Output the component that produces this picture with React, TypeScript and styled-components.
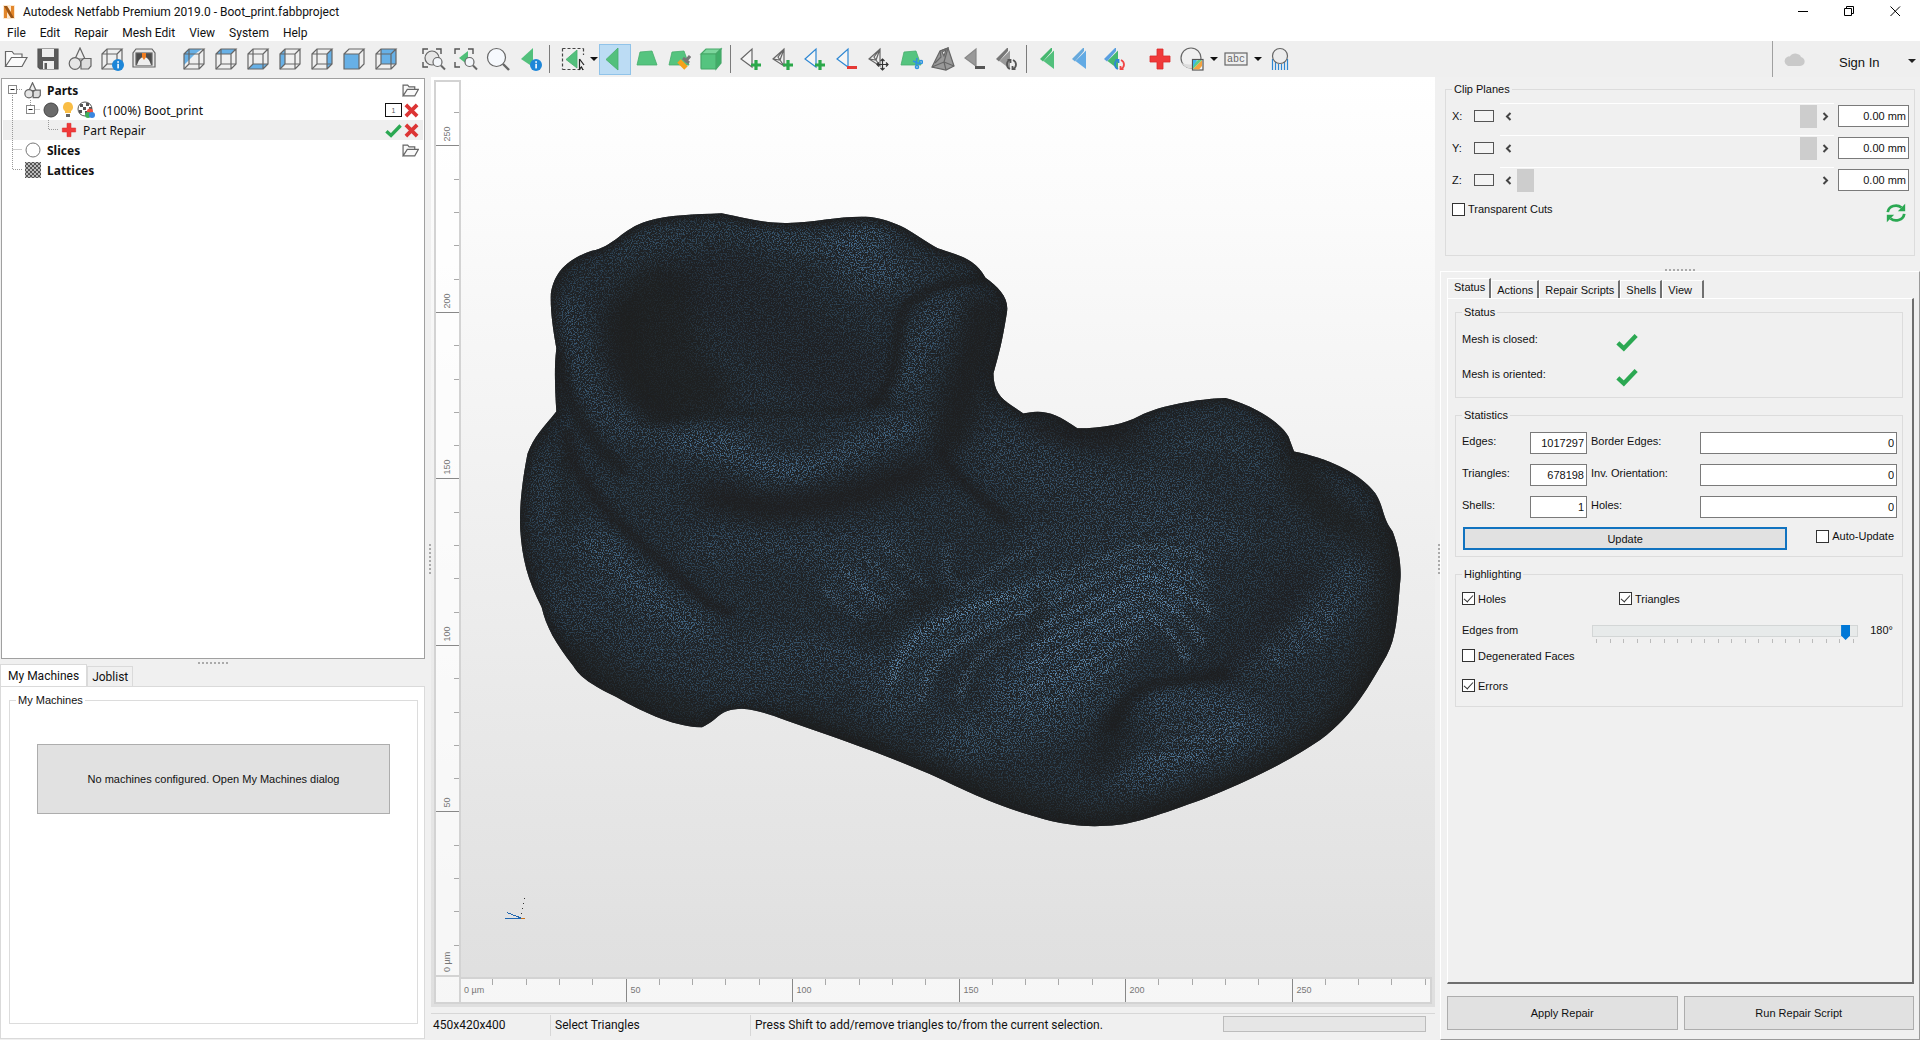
import React from "react";
import styled, { createGlobalStyle } from "styled-components";

const UI = `"Noto Sans", "Open Sans", sans-serif`;
const CHROME = `Roboto, "Noto Sans", sans-serif`;
const SMALL = `"Liberation Sans", Arial, sans-serif`;

const GlobalStyle = createGlobalStyle`
  *, *::before, *::after { box-sizing: border-box; }
  body { margin: 0; background: #f0f0f0; color: #111; }
  button, input { font: inherit; color: inherit; margin: 0; }
  svg { display: block; flex: none; }
`;

/* ---------- shell ---------- */

const Shell = styled.div`
  display: flex;
  flex-direction: column;
  height: 100vh;
  min-height: 860px;
  overflow: hidden;
  background: #f0f0f0;
  font: 12px/16px ${CHROME};
`;

const TitleBar = styled.header`
  display: flex;
  align-items: center;
  height: 23px;
  padding-left: 3px;
  gap: 8px;
  background: #fff;
`;

const Title = styled.h1`
  flex: 1;
  margin: 0;
  font-size: 12px;
  line-height: 16px;
  font-weight: 400;
`;

const WindowControls = styled.div`
  display: flex;
  padding-right: 2px;
`;

const WindowButton = styled.button`
  display: flex;
  align-items: center;
  justify-content: center;
  width: 46px;
  height: 22px;
  padding: 0;
  border: 0;
  background: transparent;
`;

const MenuBar = styled.nav`
  display: flex;
  gap: 14px;
  height: 18px;
  padding-left: 7px;
  background: #fff;
`;

const MenuItem = styled.button`
  padding: 0;
  border: 0;
  background: transparent;
  line-height: 20px;
`;

const ToolBar = styled.div`
  display: flex;
  align-items: center;
  height: 36px;
  background: #efefef;
`;

const ToolButton = styled.button<{ $active?: boolean }>`
  display: flex;
  align-items: center;
  justify-content: center;
  width: 32px;
  height: 31px;
  padding: 0;
  border: 1px solid ${(p) => (p.$active ? "#90c3e9" : "transparent")};
  background: ${(p) => (p.$active ? "#bcdcf4" : "transparent")};
`;

const DropButton = styled.button<{ $w: number }>`
  display: flex;
  align-items: center;
  justify-content: center;
  width: ${(p) => p.$w}px;
  height: 31px;
  padding: 0;
  border: 0;
  background: transparent;

  &::after {
    content: "";
    border: 4px solid transparent;
    border-top-color: #111;
    border-bottom: 0;
  }
`;

const Gap = styled.span<{ $w: number }>`
  width: ${(p) => p.$w}px;
`;

const Separator = styled.span`
  width: 8px;
  height: 28px;
  border-left: 1px solid #7b7b7b;
  margin-left: 3px;
  margin-right: -3px;
`;

const Account = styled.div`
  display: flex;
  align-items: center;
  align-self: stretch;
  margin-left: auto;
  width: 148px;
  padding-left: 9px;
  border-left: 1px solid #a0a0a0;
`;

const SignIn = styled.button`
  display: flex;
  align-items: center;
  justify-content: space-between;
  flex: 1;
  height: 36px;
  padding: 8px 4px 0 33px;
  border: 0;
  background: transparent;
  font: 13px/20px ${SMALL};

  &::after {
    content: "";
    margin-top: -4px;
    border: 4px solid transparent;
    border-top-color: #222;
    border-bottom: 0;
  }
`;

const Body = styled.div`
  display: flex;
  flex: 1;
  min-height: 0;
`;

/* ---------- left side ---------- */

const LeftSide = styled.aside`
  display: flex;
  flex-direction: column;
  width: 428px;
  padding: 1px 3px 0 0;
`;

const Tree = styled.ul`
  flex: 1;
  margin: 0 0 0 1px;
  padding: 1px;
  border: 1px solid #a0a0a0;
  background: #fff;
  font: 12px/16px ${UI};
  list-style: none;
`;

const TreeRow = styled.li<{ $strong?: boolean; $selected?: boolean }>`
  display: flex;
  align-items: center;
  height: 20px;
  padding-right: 4px;
  background: ${(p) => (p.$selected ? "#efefef" : "transparent")};
  font-weight: ${(p) => (p.$strong ? 700 : 400)};
`;

const TreeLabel = styled.span<{ $inset?: number }>`
  flex: 1;
  padding: 2px 0 0 ${(p) => p.$inset ?? 6}px;
`;

const RowIcon = styled.button`
  padding: 0;
  margin-left: 2px;
  border: 0;
  background: transparent;
`;

const DotsH = styled.div<{ $h: number }>`
  display: flex;
  align-items: flex-end;
  justify-content: center;
  height: ${(p) => p.$h}px;

  &::after {
    content: "";
    width: 30px;
    height: 2px;
    background: repeating-linear-gradient(90deg, #aaa 0 2px, transparent 2px 4px);
  }
`;

const DotsV = styled.div<{ $w: number }>`
  display: flex;
  align-items: center;
  justify-content: flex-end;
  width: ${(p) => p.$w}px;

  &::after {
    content: "";
    width: 2px;
    height: 30px;
    background: repeating-linear-gradient(180deg, #aaa 0 2px, transparent 2px 4px);
  }
`;

const Machines = styled.section`
  display: flex;
  flex-direction: column;
  height: 376px;
  padding-bottom: 1px;
`;

const MachineTabs = styled.div`
  display: flex;
  align-items: flex-end;
  height: 22px;
`;

const MachineTab = styled.button<{ $active?: boolean }>`
  height: ${(p) => (p.$active ? 23 : 20)}px;
  margin-bottom: ${(p) => (p.$active ? -1 : 0)}px;
  padding: 0 ${(p) => (p.$active ? 7 : 4)}px;
  border: 1px solid #dadada;
  border-bottom: 0;
  background: ${(p) => (p.$active ? "#fff" : "#f0f0f0")};
`;

const MachinePane = styled.div`
  display: flex;
  flex: 1;
  padding: 6px 6px 14px 8px;
  border: 1px solid #dadada;
  background: #fff;
`;

const Group = styled.fieldset<{ $pad: string }>`
  min-width: 0;
  margin: 0;
  padding: ${(p) => p.$pad};
  border: 1px solid #dcdcdc;
  font: 11px/14px ${SMALL};
`;

const Legend = styled.legend`
  padding: 0 2px;
`;

const MachineGroup = styled(Group)`
  flex: 1;
`;

const MachineAction = styled.div`
  display: flex;
  padding: 0 21px;
`;

const PushButton = styled.button<{ $h: number; $default?: boolean }>`
  flex: 1;
  width: 100%;
  height: ${(p) => p.$h}px;
  padding: 0;
  border: ${(p) => (p.$default ? "2px solid #1173c0" : "1px solid #adadad")};
  background: #e1e1e1;
  font: 11px/14px ${SMALL};
`;

/* ---------- centre ---------- */

const Centre = styled.main`
  display: flex;
  flex-direction: column;
  flex: 1;
  min-width: 0;
`;

const Viewport = styled.div`
  position: relative;
  display: grid;
  grid-template: minmax(0, 1fr) 27px / 27px minmax(0, 1fr);
  flex: 1;
  min-height: 0;
  padding: 3px;
  background: linear-gradient(#fff, #fbfbfb 14%, #e1e1e1 92%, #dfdfdf);
`;

const Scene = styled.svg`
  position: absolute;
  inset: 0;
  width: 100%;
  height: 100%;
`;

const RulerCell = styled.div<{ $edges: string }>`
  position: relative;
  min-width: 0;
  min-height: 0;
  overflow: hidden;
  border: 0 solid #d3d3d3;
  border-width: ${(p) => p.$edges};
  background: rgba(255, 255, 255, 0.72);
`;

const RulerArt = styled.svg`
  width: 100%;
  height: 100%;
  font: 9px ${SMALL};
  fill: #777;
`;

const StatusBar = styled.footer`
  display: flex;
  align-items: center;
  height: 27px;
  margin-top: 6px;
  padding: 0 9px 4px 2px;
  border-top: 1px solid #d7d7d7;
`;

const StatusCell = styled.span<{ $w?: number }>`
  flex: ${(p) => (p.$w ? `0 0 ${p.$w}px` : "1")};
  padding-left: 4px;
  border-left: 1px solid #d7d7d7;
  line-height: 21px;
  white-space: nowrap;

  &:first-child {
    padding-left: 0;
    border-left: 0;
  }
`;

const Progress = styled.div`
  width: 203px;
  height: 16px;
  margin-top: -2px;
  border: 1px solid #bcbcbc;
  background: #e6e6e6;
`;

/* ---------- right side ---------- */

const RightSide = styled.aside`
  display: flex;
  flex-direction: column;
  width: 480px;
  padding-top: 5px;
  font: 11px/14px ${SMALL};
`;

const ClipGroup = styled(Group)`
  height: 174px;
  margin: 0 5px;
`;

const ClipRow = styled.div`
  display: flex;
  align-items: center;
  height: 25px;
  margin-bottom: 7px;
`;

const ClipLabel = styled.label`
  width: 22px;
`;

const Swatch = styled.button`
  width: 20px;
  height: 12px;
  margin-right: 6px;
  padding: 0;
  border: 1px solid #555;
  background: #f4f4f4;
`;

const ScrollTrack = styled.div`
  display: flex;
  flex: 1;
  height: 25px;
  border-top: 1px solid #fff;
`;

const ScrollArrow = styled.button`
  display: flex;
  align-items: center;
  justify-content: center;
  width: 17px;
  padding: 0;
  border: 0;
  background: transparent;
`;

const ScrollRange = styled.input`
  flex: 1;
  min-width: 0;
  height: 24px;
  appearance: none;
  background: transparent;

  &::-webkit-slider-thumb {
    appearance: none;
    width: 17px;
    height: 23px;
    background: #cdcdcd;
  }
`;

const Field = styled.input<{ $w?: number }>`
  width: ${(p) => (p.$w ? `${p.$w}px` : "100%")};
  height: 22px;
  padding: 0 2px;
  border: 1px solid #7a7a7a;
  background: #fff;
  font: 11px/14px ${SMALL};
  text-align: right;
`;

const ClipField = styled(Field)`
  margin-left: 4px;
`;

const ClipFooter = styled.div`
  display: flex;
  align-items: flex-start;
  justify-content: space-between;
  padding: 3px 2px 0 0;
`;

const IconButton = styled.button`
  padding: 0;
  border: 0;
  background: transparent;
`;

const CheckLabel = styled.label`
  display: flex;
  align-items: center;
  gap: 3px;
`;

const CheckInput = styled.input`
  display: flex;
  justify-content: center;
  flex: none;
  width: 13px;
  height: 13px;
  appearance: none;
  border: 1px solid #333;
  background: #fff;

  &:checked::after {
    content: "";
    width: 5px;
    height: 9px;
    border: solid #333;
    border-width: 0 1px 1px 0;
    transform: rotate(42deg);
  }
`;

const RepairPanel = styled.section`
  display: flex;
  flex-direction: column;
  flex: 1;
  padding: 6px 5px 9px 6px;
  border: 1px solid #fff;
  border-right-color: #9b9b9b;
  border-bottom-color: #9b9b9b;
`;

const RepairTabs = styled.div`
  display: flex;
  align-items: flex-end;
  height: 20px;
`;

const RepairTab = styled.button<{ $active?: boolean }>`
  min-width: 42px;
  height: ${(p) => (p.$active ? 21 : 18)}px;
  margin: 0 0 ${(p) => (p.$active ? -1 : 0)}px 0;
  padding: 0 4px ${(p) => (p.$active ? 4 : 0)}px ${(p) => (p.$active ? 6 : 5)}px;
  border: 1px solid #fff;
  border-right: 2px solid #707070;
  border-bottom: 0;
  background: #f0f0f0;
  text-align: left;
`;

const RepairPage = styled.div`
  display: flex;
  flex-direction: column;
  gap: 10px;
  flex: 1;
  padding: 6px 9px 0 7px;
  border: 1px solid #fff;
  border-right: 2px solid #6e6e6e;
  border-bottom: 2px solid #6e6e6e;
`;

const StatusRow = styled.div`
  display: grid;
  grid-template-columns: 154px 1fr;
  align-items: center;
  height: 35px;

  svg { margin-top: 7px; }
`;

const StatGrid = styled.div`
  display: grid;
  grid-template-columns: 68px 57px 113px minmax(0, 1fr);
  row-gap: 10px;

  label { padding-top: 2px; }
  label:nth-of-type(even) { padding-left: 4px; }
`;

const UpdateRow = styled.div`
  display: flex;
  align-items: flex-start;
  gap: 29px;
  padding: 9px 3px 0 1px;

  label { padding-top: 2px; }
`;

const PairRow = styled.div<{ $h: number }>`
  display: grid;
  grid-template-columns: 157px 1fr;
  align-items: center;
  height: ${(p) => p.$h}px;
`;

const SliderRow = styled.div`
  display: grid;
  grid-template-columns: 130px 1fr 38px;
  height: 37px;
  padding-top: 14px;
`;

const Angle = styled.output`
  padding-right: 3px;
  text-align: right;
`;

const AngleRange = styled.input`
  display: block;
  width: 100%;
  height: 16px;
  appearance: none;
  background: transparent;

  &::-webkit-slider-runnable-track {
    height: 12px;
    border: 1px solid #d3d6d6;
    background: #e7eaea;
  }

  &::-webkit-slider-thumb {
    appearance: none;
    width: 9px;
    height: 15px;
    margin-top: -1px;
    background: #0078d7;
    clip-path: polygon(0 0, 100% 0, 100% 70%, 50% 100%, 0 70%);
  }
`;

const Ticks = styled.div`
  display: flex;
  justify-content: space-between;
  height: 4px;
  padding: 0 11px 0 4px;

  i { width: 1px; background: #bbb; }
  i:last-child { margin-right: -7px; }
`;

const ActionRow = styled.div`
  display: flex;
  gap: 6px;
  padding-top: 12px;
`;

/* ---------- icons ---------- */

const Icon = ({ children, size = 24 }: { children: React.ReactNode; size?: number }) => (
  <svg width={size} height={size} viewBox="0 0 24 24" fill="none" stroke="#666" strokeWidth={(1.2 * 24) / size} aria-hidden="true">
    {children}
  </svg>
);

const Folder = ({ size }: { size?: number }) => (
  <Icon size={size}>
    <path d="M1.500 19.500V4.500H8L10 7H18V10M1.500 19.500L7.500 10.500H23L18 19.500Z" fill="#fafafa" />
  </Icon>
);

const Shapes = ({ size }: { size?: number }) => (
  <Icon size={size}>
    <path d="M12 1L7 12H17Z" fill="#eee" />
    <circle cx="7" cy="16.500" r="5.800" fill="#e6e6e6" />
    <path d="M13 14L15.500 11.500H23V19L20.500 22H13Z" fill="#ddd" />
  </Icon>
);

const InfoBadge = () => (
  <g stroke="none">
    <circle cx="18" cy="18" r="6" fill="#1d86d8" />
    <rect x="17.300" y="16.800" width="1.600" height="4.600" fill="#fff" />
    <rect x="17.300" y="14.200" width="1.600" height="1.600" fill="#fff" />
  </g>
);

const faces: Record<string, string> = {
  corner: "M2 7L13 7L2 18Z M2 7L7 2H20L13 7Z",
  top: "M2 7L7 2H22L17 7Z",
  bottom: "M2 22L7 17H22L17 22Z",
  left: "M2 7L7 2V17L2 22Z",
  right: "M17 7L22 2V17L17 22Z",
  front: "M2 7H17V22H2Z",
  back: "M7 2H22V17H7Z",
  none: "",
};

const Cube = ({ face }: { face: string }) => (
  <>
    <path d={faces[face]} fill="#67b0e6" stroke="none" />
    <path d="M2 7H17V22H2ZM2 7L7 2H22L17 7M22 2V17L17 22" />
    {face !== "front" && <path d="M7 2V17H22M7 17L2 22" />}
  </>
);

const Plus = ({ x = 17, y = 18, color = "#2ba84a" }) => (
  <path d={`M${x - 5} ${y}H${x + 5}M${x} ${y - 5}V${y + 5}`} stroke={color} strokeWidth="3.200" />
);

const Triangle = ({ color }: { color: string }) => <path d="M13 2V20L2 12Z" stroke={color} fill="#fff" fillOpacity=".4" />;

const MeshTriangle = () => <path d="M13 2V19L2 12ZM13 2L9 13L2 12M9 13L13 19M13 2L7 10L9 13" />;

const Brackets = () => <path d="M1 7V2H6M14 2H19V7M1 15V20H6" stroke="#555" strokeWidth="1.400" />;

const Lens = () => (
  <>
    <circle cx="15.500" cy="15" r="4.500" fill="#f3f6fa" />
    <path d="M19 18.500L23 22.500" strokeWidth="2" />
  </>
);

const Recycle = ({ a, b }: { a: string; b: string }) => (
  <g strokeWidth="1.800">
    <path d="M15 22C11 20 11 14 15 13M12.500 13H15.500V16" stroke={a} />
    <path d="M18 13C22 15 22 20 18 22M20.500 22H17.500V19" stroke={b} />
  </g>
);

const Layered = ({ back, front }: { back: string; front: string }) => (
  <g stroke="none">
    <path d="M12 1L1 12L4 14.500L13 4V1Z" fill={back} />
    <path d="M15 3.500V22L4.500 14Z" fill={front} />
  </g>
);

const RedCross = ({ size }: { size?: number }) => (
  <Icon size={size}>
    <path d="M9 2H15V9H22V15H15V22H9V15H2V9H9Z" fill="#f03a3a" stroke="#d92b2b" strokeWidth=".8" />
  </Icon>
);

const Delete = () => (
  <Icon size={15}>
    <path d="M3 3L21 21M21 3L3 21" stroke="#dc3535" strokeWidth="6" />
  </Icon>
);

const Check = ({ size }: { size: number }) => (
  <Icon size={size}>
    <path d="M2 13L8.500 19L22 5" stroke="#2ba852" strokeWidth="4.800" />
  </Icon>
);

type Tool = { label: string; art: React.ReactNode };

const fileTools: Tool[] = [
  { label: "Open project", art: <Folder /> },
  {
    label: "Save project",
    art: (
      <Icon>
        <path d="M2 2H22V22H4L2 20Z" fill="#5b5b5b" stroke="#555" />
        <rect x="6" y="2" width="12" height="8" fill="#efefef" stroke="none" />
        <rect x="7" y="14" width="11" height="8" fill="#efefef" stroke="none" />
        <rect x="8.500" y="16" width="2.500" height="6" fill="#5b5b5b" stroke="none" />
      </Icon>
    ),
  },
  { label: "Add part", art: <Shapes /> },
  { label: "Part information", art: <Icon><Cube face="none" /><InfoBadge /></Icon> },
  {
    label: "Print",
    art: (
      <Icon>
        <path d="M4 2H20L23 6V20H1V6Z" fill="#e7e7e7" />
        <rect x="4" y="6" width="16" height="12" fill="#4c4c4c" />
        <path d="M5 18C7 11 10 10 12 10S17 11 19 18Z" fill="#eee" stroke="none" />
        <path d="M10 6H14V10L12 13L10 10Z" fill="#ef7d22" stroke="none" />
      </Icon>
    ),
  },
];

const viewTools: Tool[] = ["corner", "top", "bottom", "left", "right", "front", "back"].map((face) => ({
  label: `View ${face}`,
  art: <Icon><Cube face={face} /></Icon>,
}));

const zoomTools: Tool[] = [
  { label: "Zoom to parts", art: <Icon><Brackets /><circle cx="10" cy="11" r="7" fill="#e6e6e6" /><Lens /></Icon> },
  { label: "Zoom to selection", art: <Icon><Brackets /><path d="M14 4V18L5 11Z" fill="#4fbf78" stroke="none" /><Lens /></Icon> },
  {
    label: "Zoom",
    art: (
      <Icon>
        <circle cx="10.500" cy="10.500" r="9" fill="#f6f9fd" />
        <path d="M17 17L23 23" strokeWidth="2.400" />
      </Icon>
    ),
  },
  { label: "Triangle information", art: <Icon><path d="M15 1V20L3 12Z" fill="#52c07c" stroke="none" /><InfoBadge /></Icon> },
];

const greenQuad = <path d="M5 5L17 4L22 18H2Z" fill="#55c47f" stroke="#46ad6c" strokeWidth=".8" />;

const selectTools: Tool[] = [
  { label: "Select triangles", art: <Icon><path d="M15 1V23L3 12.500Z" fill="#52c07c" stroke="#46ad6c" strokeWidth=".8" /></Icon> },
  { label: "Select surfaces", art: <Icon>{greenQuad}</Icon> },
  {
    label: "Paint selection",
    art: (
      <Icon>
        {greenQuad}
        <path d="M12 14L19 21" stroke="#f6a21c" strokeWidth="5" />
        <path d="M16 11L22 16M18 15L23 9" stroke="#777" strokeWidth="3" />
      </Icon>
    ),
  },
  {
    label: "Select shells",
    art: (
      <Icon>
        <path d="M2 7L7 2H22L17 7Z" fill="#7cd69d" stroke="#46a869" />
        <path d="M17 7L22 2V16L17 22Z" fill="#3fae68" stroke="#46a869" />
        <rect x="2" y="7" width="15" height="15" rx="1" fill="#55c47f" stroke="#46a869" />
      </Icon>
    ),
  },
];

const minus = (color: string) => <path d="M12 20.500H22" stroke={color} strokeWidth="3" />;

const editTools: Tool[] = [
  { label: "Add triangle", art: <Icon><Triangle color="#666" /><Plus /></Icon> },
  { label: "Add node", art: <Icon><MeshTriangle /><Plus /></Icon> },
  { label: "Add edge", art: <Icon><Triangle color="#2d87d3" /><Plus /></Icon> },
  { label: "Remove edge", art: <Icon><Triangle color="#2d87d3" />{minus("#e53935")}</Icon> },
  {
    label: "Move node",
    art: (
      <Icon>
        <MeshTriangle />
        <path d="M10 17.500H21M15.500 12V23M12 15.500L10 17.500L12 19.500M19 15.500L21 17.500L19 19.500M13.500 14L15.500 12L17.500 14M13.500 21L15.500 23L17.500 21" stroke="#333" />
      </Icon>
    ),
  },
  {
    label: "Cut surface",
    art: (
      <Icon>
        {greenQuad}
        <g stroke="#2d93e0" strokeWidth="1.600">
          <path d="M14 14L21 17M18 11L17 18" />
          <circle cx="22" cy="15" r="1.500" />
          <circle cx="18" cy="20" r="1.500" />
        </g>
      </Icon>
    ),
  },
  {
    label: "Extrude",
    art: (
      <Icon>
        <path d="M9 4L17 1L23 19L15 23L1 20Z" fill="#999" />
        <path d="M9 4L17 1L13 15L15 23M13 15L1 20M13 15L23 19M9 4L10 10L4 16" />
        <path d="M11 5L15 3L13 9Z" fill="#eee" />
      </Icon>
    ),
  },
  { label: "Remove triangles", art: <Icon><path d="M13 2V19L2 11Z" fill="#999" stroke="#888" />{minus("#555")}</Icon> },
  { label: "Flip triangles", art: <Icon><Layered back="#777" front="#999" /><Recycle a="#555" b="#555" /></Icon> },
];

const orientTools: Tool[] = [
  { label: "Expand selection", art: <Icon><Layered back="#46b870" front="#52c07c" /></Icon> },
  { label: "Shrink selection", art: <Icon><Layered back="#67a9dc" front="#62aae4" /></Icon> },
  { label: "Invert selection", art: <Icon><Layered back="#5a9fe0" front="#45b870" /><Recycle a="#2d87d3" b="#f04545" /></Icon> },
];

const Tools = ({ items, active }: { items: Tool[]; active?: number }) => (
  <>
    {items.map((t, i) => (
      <ToolButton key={t.label} aria-label={t.label} title={t.label} $active={i === active}>
        {t.art}
      </ToolButton>
    ))}
  </>
);

/* ---------- tree guides ---------- */

const Guide = ({ w, d, box }: { w: number; d: string; box?: number }) => (
  <svg width={w} height="20" fill="none" stroke="#999" strokeDasharray="1 1" aria-hidden="true">
    <path d={d} />
    {box !== undefined && (
      <g strokeDasharray="none">
        <rect x={box - 4} y="5.500" width="8" height="8" fill="#fff" stroke="#888" />
        <path d={`M${box - 2} 9.500H${box + 2}`} stroke="#222" />
      </g>
    )}
  </svg>
);

/* ---------- 3D view ---------- */

const OUTLINE =
  "M83 270C88 225 105 190 150 168C185 160 200 115 240 98C275 82 320 82 362 79C400 90 430 103 470 102C520 100 560 84 605 88C660 100 680 135 715 162C750 180 775 185 793 232C815 255 832 280 828 315C822 370 818 400 806 460C806 500 818 520 835 535L855 555C885 545 905 550 943 590C985 590 1020 580 1045 560C1080 535 1140 520 1185 518C1230 535 1275 575 1288 610L1297 645C1350 660 1405 695 1430 745C1445 780 1440 800 1458 835C1470 880 1473 930 1470 960C1466 1030 1464 1090 1448 1130C1420 1200 1395 1270 1340 1330C1290 1380 1220 1430 1150 1470C1110 1490 1050 1525 1010 1532C960 1540 930 1532 900 1523C800 1485 740 1435 700 1410C620 1360 540 1320 470 1285C440 1270 420 1258 395 1256C355 1258 360 1280 330 1300C290 1300 240 1270 190 1228C150 1200 130 1180 120 1155C90 1100 75 1060 68 1015C45 950 36 900 33 830C31 770 38 700 45 650C55 610 70 590 92 550C90 500 88 450 92 400C86 350 82 310 83 270Z";

/* path, stroke width, strength */
type Stroke = [string, number, number];

const lights: Stroke[] = [
  ["M110 290C115 400 150 520 200 590C260 620 330 600 400 620", 30, 0.5],
  ["M300 620C360 630 420 690 480 690C560 670 600 610 680 580", 50, 0.5],
  ["M430 670L490 690", 40, 0.4],
  ["M440 130C500 170 570 150 620 130", 50, 0.35],
  ["M590 150C570 200 590 240 640 220", 80, 0.4],
  ["M200 170C260 130 320 120 400 130", 60, 0.15],
  ["M735 290C690 340 690 430 650 500", 40, 0.5],
  ["M150 860C200 930 240 1000 320 1060", 60, 0.5],
  ["M60 670C80 740 70 800 100 860", 34, 0.22],
  ["M130 1000C240 1120 380 1180 560 1160", 120, 0.14],
  ["M420 1110C500 1090 560 1120 600 1150", 50, 0.2],
  ["M340 870C460 860 560 880 640 860", 90, 0.2],
  ["M560 940L620 1010", 60, 0.4],
  ["M880 860L1180 840", 90, 0.2],
  ["M660 1120C700 1040 800 1000 900 960", 60, 0.35],
  ["M650 1240C640 1150 720 1060 860 1000C960 950 1040 930 1120 900", 90, 0.3],
  ["M860 1200C920 1120 1000 1040 1080 980", 130, 0.45],
  ["M760 1330C860 1270 900 1300 960 1200", 120, 0.3],
  ["M1240 1150C1320 1080 1370 1020 1400 930", 60, 0.35],
  ["M1080 1250C1150 1220 1220 1260 1220 1300C1160 1360 1080 1380 1040 1420", 80, 0.42],
  ["M820 640C900 700 960 760 1100 760", 120, 0.2],
  ["M1090 640C1160 590 1220 620 1260 700", 60, 0.15],
];

const ripples: Stroke[] = [
  ["M640 1200C645 1100 700 1040 850 980", 14, 0.6],
  ["M690 1230C695 1130 770 1070 880 1015", 14, 0.45],
  ["M750 1230C760 1140 810 1090 900 1055", 14, 0.4],
  ["M880 960C950 920 1000 890 1040 870C1080 870 1110 880 1150 900", 13, 0.4],
  ["M890 1010C970 950 1010 925 1050 905C1090 915 1120 935 1150 965", 13, 0.45],
  ["M880 1060C970 1000 1020 965 1055 945C1100 960 1130 990 1160 1030", 14, 0.55],
  ["M870 1110C970 1040 1020 1010 1060 985C1100 1010 1130 1050 1145 1100", 14, 0.6],
  ["M860 1160C960 1090 1020 1050 1060 1030C1085 1060 1110 1090 1120 1140", 14, 0.6],
  ["M860 1210C950 1150 1010 1110 1050 1080", 14, 0.5],
  ["M890 1250C960 1200 1000 1150 1040 1120", 13, 0.35],
  ["M560 920C580 960 610 990 630 1020", 12, 0.4],
  ["M595 890C620 930 645 960 660 990", 12, 0.35],
  ["M630 860C650 900 665 930 690 960", 12, 0.35],
  ["M530 970C550 1000 570 1020 590 1040", 12, 0.35],
  ["M730 870C730 920 720 960 760 970C790 940 820 900 870 880", 13, 0.3],
  ["M1250 1110L1280 1150M1280 1070L1310 1120M1310 1040L1340 1090M1340 1010L1360 1050", 12, 0.3],
  ["M1060 1300H1210M1080 1330H1200M1050 1370H1150", 13, 0.3],
];

const folds: Stroke[] = [
  ["M240 575C320 545 400 555 470 552C540 550 590 545 640 525", 10, 0.7],
  ["M610 530C660 470 640 370 660 300C700 255 740 235 790 238", 18, 0.9],
  ["M95 420C110 520 140 620 200 690", 20, 0.8],
  ["M720 640C730 700 790 760 830 810", 18, 0.85],
  ["M110 600C110 700 180 800 250 890C300 950 330 1010 375 1025", 18, 0.85],
  ["M120 860C90 800 120 740 100 660", 12, 0.5],
  ["M1000 1300C1010 1240 1040 1210 1060 1200C1110 1180 1160 1190 1180 1170", 28, 0.75],
  ["M880 980C890 1020 880 1050 860 1080", 14, 0.5],
];

const shades: Stroke[] = [
  ["M200 300C180 400 210 520 270 560", 50, 0.9],
  ["M260 260C250 340 260 440 320 500", 120, 0.7],
  ["M360 240C420 320 480 400 560 470", 160, 0.3],
  ["M790 300C790 380 755 480 735 620", 60, 0.9],
  ["M690 690C640 720 560 770 440 780C400 775 380 760 350 750", 60, 0.85],
  ["M880 580C930 610 980 630 1030 600", 44, 0.85],
  ["M1300 660C1310 730 1340 790 1400 830", 60, 0.7],
  ["M985 1400C990 1350 995 1320 1005 1280", 40, 0.75],
  ["M1180 1170C1240 1100 1280 1020 1300 940", 60, 0.4],
  ["M620 1080C640 1030 680 1000 720 990", 40, 0.5],
  ["M110 1120C200 1220 280 1270 330 1280", 70, 0.6],
  ["M480 1290C640 1370 780 1460 960 1530C1120 1500 1280 1410 1370 1290C1440 1160 1470 1040 1460 860", 70, 0.7],
];

const VIEW = "translate(500 180) scale(.61224 .42092)";

const Model = () => (
  <Scene viewBox="431 77 1004 930" role="img" aria-label="Boot_print mesh">
    <defs>
      <filter id="grain" x="0" y="0" width="100%" height="100%">
        <feTurbulence type="fractalNoise" baseFrequency=".83 .71" numOctaves="2" seed="7" />
        <feColorMatrix values="0 0 0 0 1  0 0 0 0 1  0 0 0 0 1  6 0 0 0 -2.900" />
      </filter>
      <filter id="wide" x="-40%" y="-40%" width="180%" height="180%" colorInterpolationFilters="sRGB">
        <feGaussianBlur stdDeviation="22" />
      </filter>
      <filter id="fine" x="-20%" y="-20%" width="140%" height="140%" colorInterpolationFilters="sRGB">
        <feGaussianBlur stdDeviation="5" />
      </filter>
      <filter id="fold" x="-20%" y="-20%" width="140%" height="140%" colorInterpolationFilters="sRGB">
        <feGaussianBlur stdDeviation="8" />
      </filter>
      <clipPath id="hull">
        <path d={OUTLINE} transform={VIEW} />
      </clipPath>
      <mask id="mesh" maskUnits="userSpaceOnUse" x="500" y="180" width="960" height="660">
        <rect x="500" y="180" width="960" height="660" filter="url(#grain)" />
      </mask>
    </defs>
    <g clipPath="url(#hull)">
      <rect x="500" y="180" width="960" height="660" fill="#1f2225" />
      <g mask="url(#mesh)">
        <rect x="500" y="180" width="960" height="660" fill="#2d4253" />
        <g transform={VIEW} fill="none" strokeLinecap="round" strokeLinejoin="round">
          <g stroke="#5f97c8" filter="url(#wide)">
            {lights.map(([d, w, o]) => <path key={d} d={d} strokeWidth={w} opacity={o} />)}
          </g>
          <g stroke="#7fb4e2" filter="url(#fine)">
            {ripples.map(([d, w, o]) => <path key={d} d={d} strokeWidth={w} opacity={o} />)}
          </g>
        </g>
      </g>
      <g transform={VIEW} fill="none" stroke="#1e1f20" strokeLinecap="round">
        <g filter="url(#fold)">
          {folds.map(([d, w, o]) => <path key={d} d={d} strokeWidth={w} opacity={o} />)}
        </g>
        <g filter="url(#wide)">
          {shades.map(([d, w, o]) => <path key={d} d={d} strokeWidth={w} opacity={o} />)}
        </g>
        <path d={OUTLINE} strokeWidth="22" opacity=".9" filter="url(#fold)" />
      </g>
    </g>
    <g fill="none" shapeRendering="crispEdges">
      <path d="M505 918.500H521M507 912.500L521 918" stroke="#1f66b0" />
      <path d="M521 918.500H525" stroke="#c8721c" />
      <path d="M521.500 914L524.500 898" stroke="#333" strokeDasharray="1 4" />
    </g>
  </Scene>
);

const tickAt = (i: number) => Math.round((i * 333) / 10) + 0.5;
const TICKS = Array.from({ length: 29 }, (_, i) => i + 1);
const MAJORS = [5, 10, 15, 20, 25];

const HorizontalRuler = () => (
  <RulerArt aria-label="Horizontal ruler">
    {TICKS.map((i) => (
      <path key={i} d={`M${tickAt(i) - 2} 0V${i % 5 ? 6 : 24}`} stroke={i % 5 ? "#a9a9a9" : "#888"} />
    ))}
    <text x="3" y="14">0 µm</text>
    {MAJORS.map((i) => (
      <text key={i} x={tickAt(i) + 2} y="14">{i * 10}</text>
    ))}
  </RulerArt>
);

const VerticalRuler = () => (
  <RulerArt aria-label="Vertical ruler">
    <svg y="100%" overflow="visible">
      {TICKS.slice(0, 26).map((i) => (
        <path key={i} d={`M23 ${4 - tickAt(i)}H${i % 5 ? 18 : 0}`} stroke={i % 5 ? "#a9a9a9" : "#888"} />
      ))}
      <text transform="translate(14 -3) rotate(-90)">0 µm</text>
      {MAJORS.map((i) => (
        <text key={i} transform={`translate(14 ${-tickAt(i)}) rotate(-90)`}>{i * 10}</text>
      ))}
    </svg>
  </RulerArt>
);

/* ---------- right side parts ---------- */

const Chevron = ({ d }: { d: string }) => (
  <svg width="7" height="9" fill="none" stroke="#444" strokeWidth="2" aria-hidden="true"><path d={d} /></svg>
);

const ClipAxis = ({ axis, value }: { axis: string; value: number }) => (
  <ClipRow>
    <ClipLabel htmlFor={`clip-${axis}`}>{axis}:</ClipLabel>
    <Swatch aria-label={`Toggle ${axis} plane`} />
    <ScrollTrack>
      <ScrollArrow aria-label={`Decrease ${axis}`}><Chevron d="M5.500 1L2 4.500L5.500 8" /></ScrollArrow>
      <ScrollRange type="range" min={0} max={100} defaultValue={value} aria-label={`${axis} position`} />
      <ScrollArrow aria-label={`Increase ${axis}`}><Chevron d="M1.500 1L5 4.500L1.500 8" /></ScrollArrow>
    </ScrollTrack>
    <ClipField id={`clip-${axis}`} $w={71} defaultValue="0.00 mm" />
  </ClipRow>
);

const CheckBox = ({ label, checked }: { label: string; checked?: boolean }) => (
  <CheckLabel>
    <CheckInput type="checkbox" defaultChecked={checked} />
    {label}
  </CheckLabel>
);

const stats = [
  ["Edges:", "1017297"], ["Border Edges:", "0"],
  ["Triangles:", "678198"], ["Inv. Orientation:", "0"],
  ["Shells:", "1"], ["Holes:", "0"],
];

export default function App() {
  return (
    <Shell>
      <GlobalStyle />
      <TitleBar>
        <svg width="12" height="14" viewBox="0 0 12 14" aria-hidden="true">
          <rect width="12" height="14" fill="#fde8cf" />
          <path d="M1 13V1H4L8 7V1H11V13H8L4 7V13Z" fill="#e2862b" />
          <path d="M1 1H4L11 13H8Z" fill="#9a5516" />
        </svg>
        <Title>Autodesk Netfabb Premium 2019.0 - Boot_print.fabbproject</Title>
        <WindowControls>
          <WindowButton aria-label="Minimize">
            <svg width="11" height="11" stroke="#000"><path d="M0 5.500H10" /></svg>
          </WindowButton>
          <WindowButton aria-label="Restore">
            <svg width="11" height="11" stroke="#000" fill="none"><path d="M.5 2.500H7.500V9.500H.5ZM2.500 2V.5H9.500V7.500H8" /></svg>
          </WindowButton>
          <WindowButton aria-label="Close">
            <svg width="11" height="11" stroke="#000"><path d="M.5 .5L10 10M10 .5L.5 10" /></svg>
          </WindowButton>
        </WindowControls>
      </TitleBar>
      <MenuBar>
        {["File", "Edit", "Repair", "Mesh Edit", "View", "System", "Help"].map((m) => (
          <MenuItem key={m}>{m}</MenuItem>
        ))}
      </MenuBar>
      <ToolBar>
        <Tools items={fileTools} />
        <Gap $w={18} />
        <Tools items={viewTools} />
        <Gap $w={16} />
        <Tools items={zoomTools} />
        <Separator />
        <Gap $w={3} />
        <ToolButton aria-label="Selection mode">
          <Icon>
            <path d="M1.500 1.500H22.500M1.500 1.500V22.500M22.500 1.500V8M1.500 22.500H22.500" strokeDasharray="3 2" stroke="#444" />
            <path d="M16 3V21L5 12.500Z" fill="#52c07c" stroke="#46ad6c" strokeWidth=".8" />
            <path d="M18.500 12V22L20.500 20L22 23" stroke="#222" />
            <path d="M18.500 12L23 18" stroke="#222" />
          </Icon>
        </ToolButton>
        <DropButton $w={10} aria-label="Selection modes" />
        <Tools items={selectTools} active={0} />
        <Separator />
        <Tools items={editTools} />
        <Separator />
        <Gap $w={4} />
        <Tools items={orientTools} />
        <Gap $w={13} />
        <ToolButton aria-label="Repair part"><RedCross /></ToolButton>
        <ToolButton aria-label="Color mode">
          <Icon>
            <circle cx="11" cy="11" r="10" fill="#f0f0f0" />
            <path d="M2 16C6 18 14 18 20 15C17 22 6 24 2 16Z" fill="#ddd" stroke="none" />
            <rect x="12.500" y="12.500" width="10.500" height="10.500" fill="#f6f6f6" stroke="#555" />
            <path d="M13 22L22 13V19L19 22.500Z" fill="#f4a340" stroke="none" />
            <path d="M13 22V17L18 13H22Z" fill="#59cf8a" stroke="none" />
            <path d="M13 20V13H17Z" fill="#3fb4f0" stroke="none" />
          </Icon>
        </ToolButton>
        <DropButton $w={12} aria-label="Color modes" />
        <ToolButton aria-label="Labels">
          <Icon>
            <rect x="1" y="6" width="22" height="12" />
            <text x="12" y="15" textAnchor="middle" fontSize="10" fontFamily="Liberation Mono, monospace" fill="#666" stroke="none">abc</text>
          </Icon>
        </ToolButton>
        <DropButton $w={12} aria-label="Label modes" />
        <ToolButton aria-label="Supports">
          <Icon>
            <path d="M4.500 12V23M7.500 15V23M10.500 17V23M13.500 17V23M16.500 15V23M19.500 12V23" stroke="#2d87d3" />
            <circle cx="12" cy="9" r="7.500" fill="#ececec" />
          </Icon>
        </ToolButton>
        <Account>
          <svg width="24" height="16" viewBox="0 0 24 16" aria-hidden="true">
            <path d="M6 15A5 5 0 0 1 5 6C7 5 8 6 9 4A6 5 0 0 1 19 6C24 7 24 15 18 15Z" fill="#c9c9c9" />
          </svg>
          <SignIn>Sign In</SignIn>
        </Account>
      </ToolBar>

      <Body>
        <LeftSide>
          <Tree>
            <TreeRow $strong>
              <Guide w={21} d="M9.500 15V20M14 9.500H19" box={9.5} />
              <Shapes size={17} />
              <TreeLabel>Parts</TreeLabel>
              <RowIcon aria-label="Open parts"><Folder size={17} /></RowIcon>
            </TreeRow>
            <TreeRow>
              <Guide w={40} d="M9.500 0V20M27.500 0V5M27.500 9.500H37" box={27.5} />
              <svg width="16" height="16"><circle cx="8" cy="8" r="7" fill="#6a6a6a" stroke="#444" /></svg>
              <svg width="18" height="16" viewBox="0 0 18 16">
                <path d="M9 0A5 5 0 0 0 6 9V11H12V9A5 5 0 0 0 9 0Z" fill="#f9bd45" />
                <path d="M7 12H11V15H7Z" fill="#666" />
              </svg>
              <svg width="18" height="18" viewBox="0 0 18 18">
                <circle cx="8" cy="8" r="7" fill="#fff" stroke="#555" />
                <path d="M3 3H6V6H3ZM9 2H12V5H9ZM6 6H9V9H6ZM12 6H15V9H12ZM2 9H5V12H2ZM8 10H11V13H8Z" fill="#555" />
                <circle cx="13" cy="10.500" r="3" fill="#ee5340" />
                <circle cx="11" cy="14" r="3" fill="#3fae5a" />
                <circle cx="15" cy="14" r="3" fill="#3b86e0" />
              </svg>
              <TreeLabel $inset={8}>(100%) Boot_print</TreeLabel>
              <svg width="17" height="14"><rect x=".5" y=".5" width="16" height="13" fill="#fff" stroke="#111" /><text x="8.500" y="10" textAnchor="middle" fontSize="7" fontFamily="Liberation Sans, sans-serif" fill="#555">1</text></svg>
              <RowIcon aria-label="Remove part"><Delete /></RowIcon>
            </TreeRow>
            <TreeRow $selected>
              <Guide w={58} d="M9.500 0V20M45.500 0V9.500H55" />
              <RedCross size={16} />
              <TreeLabel>Part Repair</TreeLabel>
              <RowIcon aria-label="Apply repair to part"><Check size={17} /></RowIcon>
              <RowIcon aria-label="Cancel repair"><Delete /></RowIcon>
            </TreeRow>
            <TreeRow $strong>
              <Guide w={22} d="M9.500 0V20M9.500 9.500H19" />
              <svg width="16" height="16"><circle cx="8" cy="8" r="7" fill="#fff" stroke="#777" /></svg>
              <TreeLabel>Slices</TreeLabel>
              <RowIcon aria-label="Open slices"><Folder size={17} /></RowIcon>
            </TreeRow>
            <TreeRow $strong>
              <Guide w={22} d="M9.500 0V9.500H19" />
              <svg width="16" height="16">
                <rect width="16" height="16" fill="#bbb" />
                <path d="M0 4L4 0M0 8L8 0M0 12L12 0M0 16L16 0M4 16L16 4M8 16L16 8M12 16L16 12M12 0L16 4M8 0L16 8M4 0L16 12M0 0L16 16M0 4L12 16M0 8L8 16M0 12L4 16" stroke="#555" />
              </svg>
              <TreeLabel>Lattices</TreeLabel>
            </TreeRow>
          </Tree>
          <DotsH $h={5} />
          <Machines>
            <MachineTabs>
              <MachineTab $active>My Machines</MachineTab>
              <MachineTab>Joblist</MachineTab>
            </MachineTabs>
            <MachinePane>
              <MachineGroup $pad="37px 6px 0">
                <Legend>My Machines</Legend>
                <MachineAction>
                  <PushButton $h={70}>No machines configured. Open My Machines dialog</PushButton>
                </MachineAction>
              </MachineGroup>
            </MachinePane>
          </Machines>
        </LeftSide>
        <DotsV $w={3} />

        <Centre>
          <Viewport>
            <Model />
            <RulerCell $edges="2px"><VerticalRuler /></RulerCell>
            <div />
            <RulerCell $edges="0 2px 2px" />
            <RulerCell $edges="2px 2px 2px 0"><HorizontalRuler /></RulerCell>
          </Viewport>
          <StatusBar>
            <StatusCell $w={117}>450x420x400</StatusCell>
            <StatusCell $w={200}>Select Triangles</StatusCell>
            <StatusCell>Press Shift to add/remove triangles to/from the current selection.</StatusCell>
            <Progress role="progressbar" aria-label="Progress" />
          </StatusBar>
        </Centre>
        <DotsV $w={5} />

        <RightSide>
          <ClipGroup $pad="7px 5px 0 6px">
            <Legend>Clip Planes</Legend>
            <ClipAxis axis="X" value={100} />
            <ClipAxis axis="Y" value={100} />
            <ClipAxis axis="Z" value={0} />
            <ClipFooter>
              <CheckBox label="Transparent Cuts" />
              <IconButton aria-label="Reset clip planes">
                <Icon size={22}>
                  <path d="M3 11C4 4 13 2 18 6M21 13C20 20 11 22 6 18" stroke="#2ba852" strokeWidth="3" />
                  <path d="M22 2V10H14ZM2 22V14H10Z" fill="#2ba852" stroke="none" />
                </Icon>
              </IconButton>
            </ClipFooter>
          </ClipGroup>
          <DotsH $h={15} />
          <RepairPanel>
            <RepairTabs>
              <RepairTab $active>Status</RepairTab>
              <RepairTab>Actions</RepairTab>
              <RepairTab>Repair Scripts</RepairTab>
              <RepairTab>Shells</RepairTab>
              <RepairTab>View</RepairTab>
            </RepairTabs>
            <RepairPage>
              <Group $pad="2px 6px 6px">
                <Legend>Status</Legend>
                <StatusRow>Mesh is closed:<Check size={22} /></StatusRow>
                <StatusRow>Mesh is oriented:<Check size={22} /></StatusRow>
              </Group>
              <Group $pad="10px 5px 6px 6px">
                <Legend>Statistics</Legend>
                <StatGrid>
                  {stats.map(([label, value]) => (
                    <React.Fragment key={label}>
                      <label htmlFor={label}>{label}</label>
                      <Field id={label} defaultValue={value} readOnly />
                    </React.Fragment>
                  ))}
                </StatGrid>
                <UpdateRow>
                  <PushButton $h={23} $default>Update</PushButton>
                  <CheckBox label="Auto-Update" />
                </UpdateRow>
              </Group>
              <Group $pad="7px 6px 0">
                <Legend>Highlighting</Legend>
                <PairRow $h={21}>
                  <CheckBox label="Holes" checked />
                  <CheckBox label="Triangles" checked />
                </PairRow>
                <SliderRow>
                  <label htmlFor="edge-angle">Edges from</label>
                  <div>
                    <AngleRange id="edge-angle" type="range" min={0} max={185} defaultValue={180} />
                    <Ticks>{Array.from({ length: 20 }, (_, i) => <i key={i} />)}</Ticks>
                  </div>
                  <Angle htmlFor="edge-angle">180°</Angle>
                </SliderRow>
                <PairRow $h={19}><CheckBox label="Degenerated Faces" /></PairRow>
                <PairRow $h={41}><CheckBox label="Errors" checked /></PairRow>
              </Group>
            </RepairPage>
            <ActionRow>
              <PushButton $h={34}>Apply Repair</PushButton>
              <PushButton $h={34}>Run Repair Script</PushButton>
            </ActionRow>
          </RepairPanel>
        </RightSide>
      </Body>
    </Shell>
  );
}
